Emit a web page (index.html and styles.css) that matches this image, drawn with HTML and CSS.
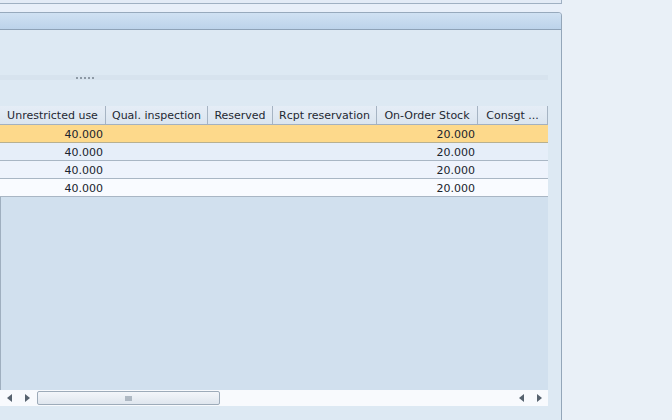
FILE: index.html
```html
<!DOCTYPE html>
<html lang="en">
<head>
  <meta charset="UTF-8">
  <meta name="viewport" content="width=device-width, initial-scale=1.0">
  <title>Stock Overview</title>
  <link rel="stylesheet" href="styles.css">
</head>
<body>
  <div class="screen">
    <div class="main">
      <div class="prev-panel"></div>

      <div class="panel">
        <div class="panel-head"></div>
        <div class="panel-body">
          <div class="toolbar"></div>

          <!-- Splitter entre a arvore e a grade -->
          <div class="splitter"><span class="grip"></span></div>

          <div class="grid">
            <div class="grid-head">
              <div class="hcell">Unrestricted use</div>
              <div class="hcell">Qual. inspection</div>
              <div class="hcell">Reserved</div>
              <div class="hcell">Rcpt reservation</div>
              <div class="hcell">On-Order Stock</div>
              <div class="hcell">Consgt ...</div>
            </div>

            <div class="row selected">
              <div class="cell num">40.000</div>
              <div class="cell"></div>
              <div class="cell"></div>
              <div class="cell"></div>
              <div class="cell num">20.000</div>
              <div class="cell"></div>
            </div>
            <div class="row alt">
              <div class="cell num">40.000</div>
              <div class="cell"></div>
              <div class="cell"></div>
              <div class="cell"></div>
              <div class="cell num">20.000</div>
              <div class="cell"></div>
            </div>
            <div class="row alt2">
              <div class="cell num">40.000</div>
              <div class="cell"></div>
              <div class="cell"></div>
              <div class="cell"></div>
              <div class="cell num">20.000</div>
              <div class="cell"></div>
            </div>
            <div class="row">
              <div class="cell num">40.000</div>
              <div class="cell"></div>
              <div class="cell"></div>
              <div class="cell"></div>
              <div class="cell num">20.000</div>
              <div class="cell"></div>
            </div>

            <div class="grid-empty"></div>

            <!-- Barra de rolagem horizontal -->
            <div class="hscroll">
              <div class="sbtn"><span class="arrow left"></span></div>
              <div class="sbtn"><span class="arrow right"></span></div>
              <div class="thumb"><span class="thumb-grip"></span></div>
              <div class="track"></div>
              <div class="sbtn"><span class="arrow left"></span></div>
              <div class="sbtn"><span class="arrow right"></span></div>
            </div>
          </div>
        </div>
      </div>
    </div>
    <div class="side"></div>
  </div>
</body>
</html>
```

FILE: styles.css
```css
body {
  margin: 0;
  font-family: "DejaVu Sans", Tahoma, sans-serif;
  font-size: 11px;
  color: #1a232d;
  background: #e9f0f7;
}
.screen {
  display: flex;
  width: 672px;
  height: 420px;
  overflow: hidden;
}
.main {
  width: 562px;
  display: flex;
  flex-direction: column;
  background: #e8eff9;
}
.side {
  flex: 1;
  background: #e9f0f7;
}
.prev-panel {
  height: 3px;
  background: #e3ebf6;
  border-bottom: 1px solid #9fb0c2;
  border-right: 1px solid #9fb0c2;
}
.panel {
  margin-top: 8px;
  flex: 1;
  display: flex;
  flex-direction: column;
  border-top: 1px solid #97a9bc;
  border-right: 1px solid #93a6b9;
  border-top-right-radius: 4px;
  overflow: hidden;
}
.panel-head {
  height: 16px;
  background: linear-gradient(#d0e1f2, #bcd3ea);
  border-bottom: 1px solid #8ea2b7;
}
.panel-body {
  flex: 1;
  display: flex;
  flex-direction: column;
  background: #dde9f3;
  padding-bottom: 14px;
}
.toolbar {
  height: 45px;
}
.splitter {
  width: 548px;
  height: 5px;
  background: #d7e3ee;
  position: relative;
}
.grip {
  position: absolute;
  left: 76px;
  top: 2px;
  width: 18px;
  height: 2px;
  background: repeating-linear-gradient(90deg, #8d99a5 0 2px, transparent 2px 4px);
}
.grid {
  margin-top: 26px;
  width: 548px;
  flex: 1;
  display: flex;
  flex-direction: column;
}
.grid-head, .row {
  display: grid;
  grid-template-columns: 106px 102px 65px 104px 101px 70px;
}
.grid-head {
  height: 18px;
  border-bottom: 1px solid #a3b1c0;
}
.hcell {
  background: linear-gradient(#e5edf6, #dbe5ef);
  border-right: 1px solid #a6b4c3;
  text-align: center;
  line-height: 20px;
  white-space: nowrap;
  overflow: hidden;
  color: #1e2832;
}
.row {
  height: 17px;
  background: #f9fbff;
  border-bottom: 1px solid #a9b6c4;
  overflow: hidden;
}
.row.selected {
  background: #fdd98b;
  border-bottom-color: #b8b090;
}
.row.alt {
  background: #e6eef9;
}
.row.alt2 {
  background: #eef3fc;
}
.cell {
  line-height: 19px;
  white-space: nowrap;
}
.cell.num {
  text-align: right;
  padding-right: 3px;
}
.grid-empty {
  flex: 1;
  background: #d1e0ee;
  border-left: 1px solid #9fafbf;
}
.hscroll {
  height: 16px;
  display: flex;
  align-items: center;
  background: #f8fafd;
}
.sbtn {
  width: 18px;
  height: 16px;
  display: flex;
  align-items: center;
  justify-content: center;
}
.arrow {
  width: 0;
  height: 0;
  border-top: 4px solid transparent;
  border-bottom: 4px solid transparent;
}
.arrow.left {
  border-right: 5px solid #56626e;
}
.arrow.right {
  border-left: 5px solid #56626e;
}
.thumb {
  margin-left: 1px;
  width: 181px;
  height: 12px;
  border: 1px solid #9dabb9;
  border-radius: 2px;
  background: linear-gradient(#f3f6fa, #dfe6ee);
  display: flex;
  align-items: center;
  justify-content: center;
}
.thumb-grip {
  width: 7px;
  height: 5px;
  background: radial-gradient(circle, #9aa6b2 0.6px, transparent 1px) 0 0 / 2px 2px;
}
.track {
  flex: 1;
}
```
